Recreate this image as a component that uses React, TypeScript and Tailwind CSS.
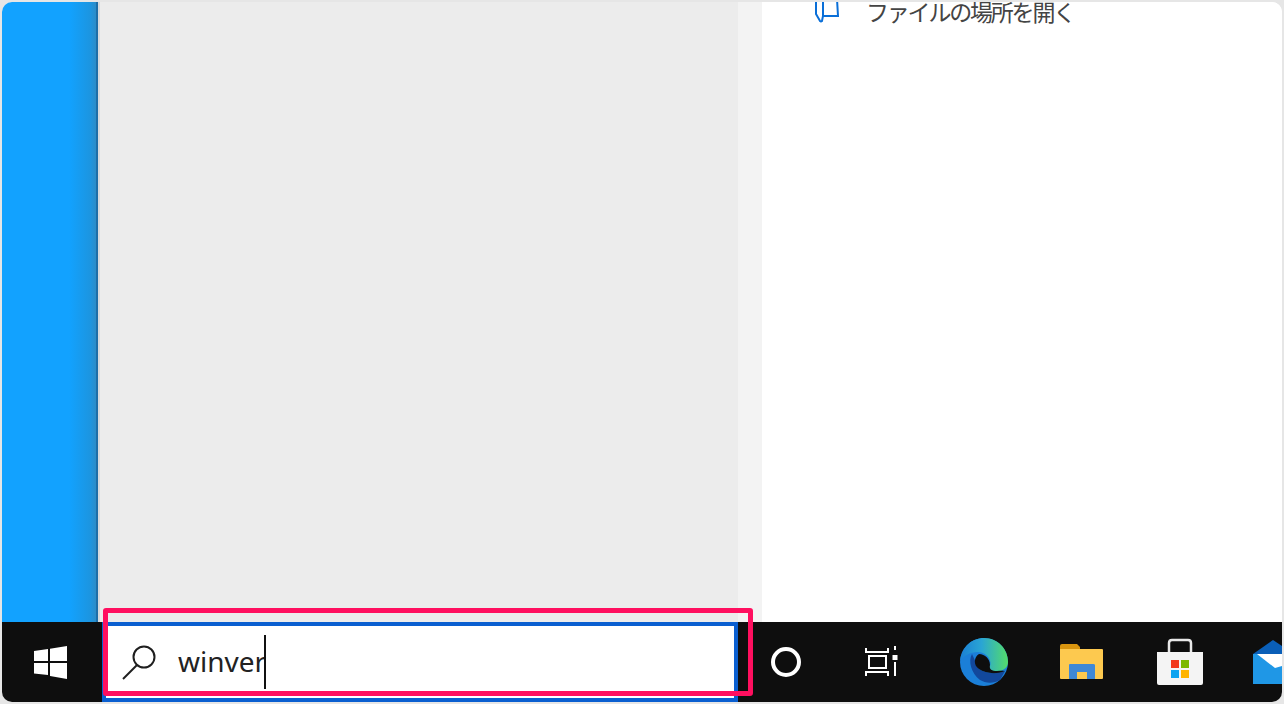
export default function App() {
  return (
    <div className="relative w-[1284px] h-[704px] bg-[#e6e6e6] p-[2px] overflow-hidden">
      <div className="flex flex-col w-full h-full rounded-[10px] overflow-hidden bg-white">
        {/* desktop + start menu */}
        <div className="flex h-[620px]">
          <div className="w-[96px] bg-[linear-gradient(90deg,#12a2ff_0%,#12a2ff_70%,#1c95e0_92%,#2a8cc8_98%,#1b6ea8_98%,#1b6ea8_100%)]" />
          <div className="flex w-[640px]">
            <div className="w-[2px] bg-[#d5dadd]" />
            <div className="flex-1 bg-[#ececec]" />
          </div>
          <div className="w-[24px] bg-[#f3f3f3]" />
          <div className="flex-1 bg-white overflow-hidden">
            <div className="flex items-center h-[24px] -mt-[3px] pl-[52px]">
              <svg width="26" height="24" viewBox="0 0 26 24" fill="none" stroke="#0a6fd8" strokeWidth="2">
                <path d="M2 0 V15 L6 22 Q7 23 8 22 L9 17 V0" />
                <path d="M9 17 H24 L23 0" />
              </svg>
              <span className="ml-[26px] text-[23px] tracking-[-2.2px] text-[#444] leading-none font-['Noto_Sans_CJK_JP',sans-serif]">ファイルの場所を開く</span>
            </div>
          </div>
        </div>

        {/* taskbar */}
        <div className="flex flex-1 items-stretch bg-[#0e0e0e]">
          <div className="flex w-[100px] shrink-0 items-center pl-[32px]">
            <svg width="33" height="33" viewBox="0 0 33 33" fill="#fff">
              <path d="M0 5 L14 3 V15 H0 Z" />
              <path d="M16 2.7 L33 0 V15 H16 Z" />
              <path d="M0 17 H14 V29 L0 27.5 Z" />
              <path d="M16 17 H33 V33 L16 30 Z" />
            </svg>
          </div>
          <div className="flex w-[636px] shrink-0 items-center border-[4px] border-[#0a5fd0] bg-white">
            <svg className="ml-[15px]" width="38" height="36" viewBox="0 0 38 36" fill="none" stroke="#1f1f1f" strokeWidth="2">
              <circle cx="23" cy="13" r="10.5" />
              <path d="M16 21 L2 35" />
            </svg>
            <span className="ml-[19px] -mt-[2px] text-[28px] leading-none text-[#222] font-['Noto_Sans',sans-serif]">winver</span>
            <div className="-ml-[2px] w-[2px] h-[54px] bg-[#111]" />
          </div>
          <div className="flex flex-1 items-center">
            <div className="ml-[33px] w-[30px] h-[30px] rounded-full border-[4px] border-white" />
            <svg className="ml-[64px]" width="33" height="32" viewBox="0 0 33 32" fill="none" stroke="#fff" strokeWidth="2">
              <path d="M1 2 V6 H23 V2" />
              <path d="M4 10 H21 V22 H4 Z" />
              <path d="M1 30 V26 H23 V30" />
              <path d="M30 0 V4" />
              <path d="M30 16 V30" />
              <rect x="27.5" y="9" width="5" height="5" fill="#fff" stroke="none" />
            </svg>
            <svg className="ml-[61px]" width="50" height="50" viewBox="0 0 50 50">
              <defs>
                <linearGradient id="edgeTop" x1="0" y1="0.5" x2="1" y2="0.5">
                  <stop offset="0" stopColor="#1a7fd4" />
                  <stop offset="0.45" stopColor="#2aa5d4" />
                  <stop offset="1" stopColor="#54dc6a" />
                </linearGradient>
              </defs>
              <circle cx="25" cy="25" r="24" fill="#1b7fd8" />
              <path d="M13 17 C9 24 12 36 21 43 C26 46 34 47 41 43 L46 34 C36 38 26 36 20 32 Z" fill="#12489c" />
              <path d="M20 17 C15 20 14 28 20 32 C26 36 36 38 46 34 L38 33 C33 33 30 31 31 28 C31 22 26 17 20 17 Z" fill="#0e0e0e" />
              <path d="M1 24 C3 10 13 1 25 1 C39 1 49 12 49 25 C49 31 44 34 38 34 C33 34 30 32 31 29 C33 25 29 15 19 15 C11 15 4 19 1 24 Z" fill="url(#edgeTop)" />
            </svg>
            <svg className="ml-[51px]" width="44" height="36" viewBox="0 0 44 36">
              <path d="M0 2 Q0 0 2 0 H17 L20 3 V6 H0 Z" fill="#d9950f" />
              <path d="M0 5 H42 Q43 5 43 6 V34 Q43 35 42 35 H1 Q0 35 0 34 Z" fill="#fdc94f" />
              <path d="M9 35 V21 Q9 20 10 20 H33 Q35 20 35 21 V35 H27 V28 H17 V35 Z" fill="#3f88d6" />
            </svg>
            <svg className="ml-[52px]" width="48" height="48" viewBox="0 0 48 48">
              <path d="M13 14 V5 Q13 2 16 2 H32 Q35 2 35 5 V14" fill="none" stroke="#e8e8e8" strokeWidth="2.5" />
              <path d="M1 14 H47 V45 Q47 47 45 47 H3 Q1 47 1 45 Z" fill="#f4f4f4" />
              <rect x="15" y="22" width="8" height="8" fill="#f2391b" />
              <rect x="25" y="22" width="8" height="8" fill="#7cb800" />
              <rect x="15" y="32" width="8" height="8" fill="#0ea3f0" />
              <rect x="25" y="32" width="8" height="8" fill="#ffb400" />
            </svg>
            <svg className="ml-[49px] shrink-0" width="29" height="44" viewBox="0 0 29 44">
              <path d="M0 14 L20 0 L29 6 V14 Z" fill="#0a5fb8" />
              <path d="M0 14 H29 V44 H0 Z" fill="#1f97e6" />
              <path d="M4 14 H29 V26 L22 28 Z" fill="#fff" />
            </svg>
          </div>
        </div>
      </div>

      {/* annotation box */}
      <div className="absolute left-[103px] top-[608px] w-[650px] h-[88px] rounded-[3px] border-[5px] border-[#ff0f5f]" />
    </div>
  )
}
